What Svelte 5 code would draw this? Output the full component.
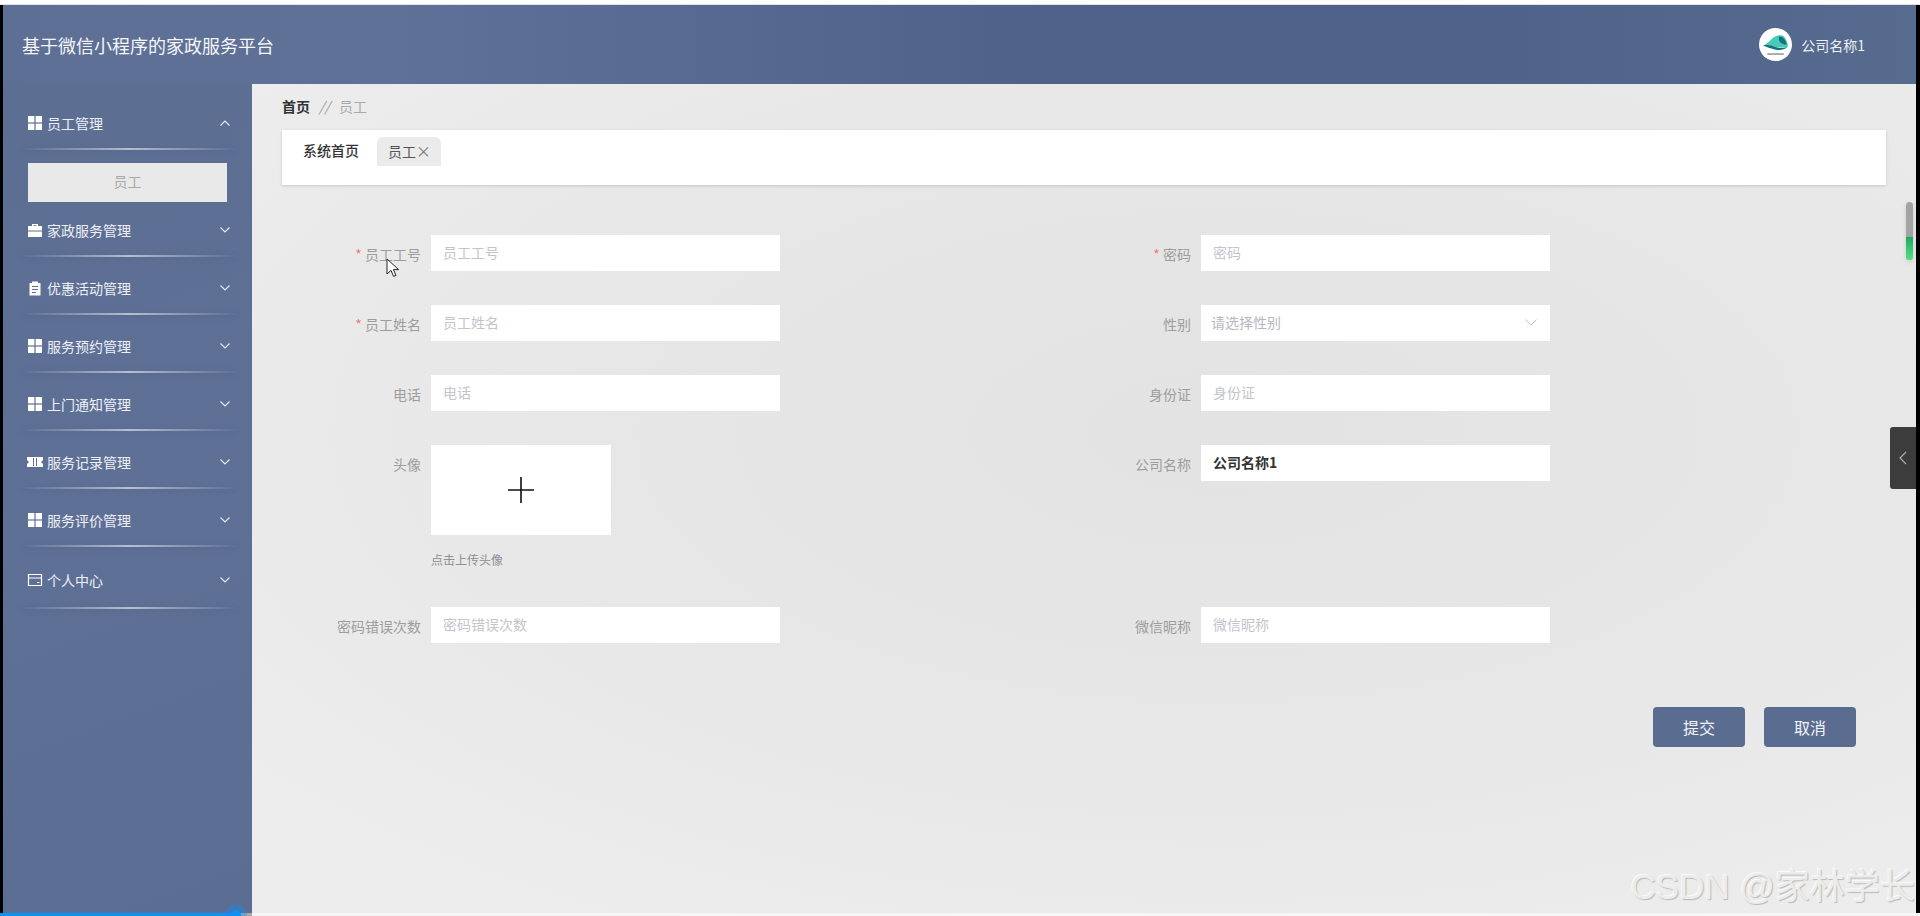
<script>
  const menus = [
    { name: "员工管理", icon: "grid", open: true, subs: ["员工"] },
    { name: "家政服务管理", icon: "case" },
    { name: "优惠活动管理", icon: "clip" },
    { name: "服务预约管理", icon: "grid" },
    { name: "上门通知管理", icon: "grid" },
    { name: "服务记录管理", icon: "ticket" },
    { name: "服务评价管理", icon: "grid" },
    { name: "个人中心", icon: "card" }
  ];
</script>

<div class="strip-top"></div>
<div class="frame">
  <header class="topbar">
    <h1 class="title">基于微信小程序的家政服务平台</h1>
    <div class="user">
      <svg class="logo" viewBox="0 0 32 32" width="33" height="33">
        <circle cx="16" cy="16" r="16" fill="#fff" />
        <path d="M4 17c3-1 5-3 8-6 4-4 9-5 12-3 2 2 4 6 4 10-5 2-9 1-13 0-4-1-7-1-11-1z" fill="#43cdb6" />
        <path d="M4 17c4-1 8 0 11 1 5 2 9 2 13 0-2 3-8 4-12 3-4-1-8-2-12-4z" fill="#17707c" />
        <path d="M20 8c3 0 6 4 7 8-3 0-6-1-7-3-1-2-1-4 0-5z" fill="#1b6f7e" />
        <rect x="8" y="24.5" width="16" height="1.6" fill="#9a9ea5" />
      </svg>
      <span>公司名称1</span>
    </div>
  </header>

  <div class="body">
    <aside class="sidebar">
      {#each menus as menu}
        <div class="menu">
          <div class="menu-head">
            <svg class="icon" viewBox="0 0 16 16" width="16" height="16" fill="#fff">
              {#if menu.icon == "grid"}
                <rect x="1" y="1" width="6.4" height="6.4" /><rect x="8.6" y="1" width="6.4" height="6.4" />
                <rect x="1" y="8.6" width="6.4" height="6.4" /><rect x="8.6" y="8.6" width="6.4" height="6.4" />
              {:else if menu.icon == "case"}
                <path d="M5 4V2h6v2h4v4.6H1V4zm1.4 0h3.2V3.2H6.4zM1 9.6h14V15H1z" />
              {:else if menu.icon == "clip"}
                <path d="M5 1.5h6V3h2.5v12.5h-11V3H5zM5 6v1h6V6zm0 3v1h6V9zm0 3v1h4v-1z" fill-rule="evenodd" />
              {:else if menu.icon == "ticket"}
                <path d="M0 3h16v3l-2 2 2 2v3H0v-3l2-2-2-2zm6 1v8h1V4zm3 0v8h1V4z" fill-rule="evenodd" />
              {:else}
                <path d="M1.5 2.5h13v11h-13zM1.5 6h13M10 10.5h2.5" fill="none" stroke="#fff" stroke-width="1.2" />
              {/if}
            </svg>
            <span class="menu-name">{menu.name}</span>
            <svg class="chev" viewBox="0 0 10 6" width="10" height="6" fill="none" stroke="#e8ebf2" stroke-width="1.1">
              {#if menu.open}
                <polyline points="0.5,5.5 5,1 9.5,5.5" />
              {:else}
                <polyline points="0.5,0.5 5,5 9.5,0.5" />
              {/if}
            </svg>
          </div>
          <div class="divider"></div>
          {#if menu.subs}
            {#each menu.subs as sub}
              <div class="sub">{sub}</div>
            {/each}
          {/if}
        </div>
      {/each}
    </aside>

    <main class="main">
      <div class="crumbs">
        <b>首页</b>
        <i>//</i>
        <span>员工</span>
      </div>

      <div class="tabs">
        <span class="tab">系统首页</span>
        <span class="tab active">员工<em>×</em></span>
      </div>

      <form class="form">
        <div class="field">
          <label><s>*</s> 员工工号</label>
          <input placeholder="员工工号" />
        </div>
        <div class="field">
          <label><s>*</s> 密码</label>
          <input placeholder="密码" />
        </div>
        <div class="field">
          <label><s>*</s> 员工姓名</label>
          <input placeholder="员工姓名" />
        </div>
        <div class="field">
          <label>性别</label>
          <div class="select">
            <span>请选择性别</span>
            <svg viewBox="0 0 12 7" width="12" height="7" fill="none" stroke="#c0c4cc" stroke-width="1"><polyline points="0.5,0.5 6,6 11.5,0.5" /></svg>
          </div>
        </div>
        <div class="field">
          <label>电话</label>
          <input placeholder="电话" />
        </div>
        <div class="field">
          <label>身份证</label>
          <input placeholder="身份证" />
        </div>
        <div class="field">
          <label>头像</label>
          <div class="upload-wrap">
            <div class="upload">
              <svg viewBox="0 0 26 26" width="26" height="26" stroke="#111" stroke-width="1.6"><path d="M13 0v26M0 13h26" /></svg>
            </div>
            <div class="hint">点击上传头像</div>
          </div>
        </div>
        <div class="field">
          <label>公司名称</label>
          <input class="filled" value="公司名称1" readonly />
        </div>
        <div class="field">
          <label>密码错误次数</label>
          <input placeholder="密码错误次数" />
        </div>
        <div class="field">
          <label>微信昵称</label>
          <input placeholder="微信昵称" />
        </div>
      </form>

      <div class="actions">
        <button type="button">提交</button>
        <button type="button">取消</button>
      </div>

      <div class="scroll-thumb"><div class="scroll-green"></div></div>
      <div class="handle">
        <svg viewBox="0 0 8 14" width="8" height="14" fill="none" stroke="#aaa" stroke-width="1.2"><polyline points="7,1 1,7 7,13" /></svg>
      </div>
      <div class="mark">CSDN @家林学长</div>

      <!-- screen recorder left the pointer on the first label -->
      <svg class="cursor" viewBox="0 0 14 20" width="14" height="20">
        <path d="M1 1v15l4-3.6 2.6 6 2.4-1-2.6-5.8h5.2z" fill="#fff" stroke="#222" stroke-width="1" />
      </svg>
    </main>
  </div>
</div>
<div class="strip-bottom">
  <div class="progress"><div class="knob"></div></div>
</div>

<style>
  :global(body) {
    background: #000;
    overflow: hidden;
  }

  .strip-top {
    height: 4px;
    background: #fff;
    border-bottom: 1px solid #dfe3ea;
  }

  .frame {
    height: 908px;
    padding: 0 4px 0 3px;
    background: #000;
    display: flex;
    flex-direction: column;
    font-family: "Noto Sans CJK SC", "Liberation Sans", sans-serif;
  }

  .topbar {
    height: 79px;
    flex: none;
    display: flex;
    align-items: center;
    justify-content: space-between;
    padding: 0 51px 0 19px;
    color: #fff;
    background: linear-gradient(90deg, #5d6f95 0%, #5f7197 20%, #4f6189 55%, #4e6289 75%, #566b8e 100%);
  }

  .title {
    margin: 0;
    font-size: 18px;
    font-weight: 400;
    color: #f4f5f8;
  }

  .user {
    display: flex;
    align-items: center;
    gap: 9px;
    font-size: 14px;
    color: #eef0f4;
  }

  .body {
    flex: 1;
    display: flex;
    min-height: 0;
  }

  .sidebar {
    width: 249px;
    flex: none;
    padding-top: 13px;
    background: linear-gradient(160deg, #5c6e92 0%, #5f7096 50%, #5c6d93 100%);
  }

  .menu {
    padding-top: 12px;
    padding-bottom: 5px;
  }

  .menu:last-child {
    padding-top: 14px;
  }

  .menu-head {
    display: flex;
    align-items: center;
    height: 28px;
    margin-bottom: 11px;
    padding: 0 22px 0 24px;
    color: #eef0f5;
    font-size: 14px;
  }

  .menu:last-child .menu-head {
    margin-bottom: 13px;
  }

  .icon {
    flex: none;
    margin-right: 4px;
  }

  .menu-name {
    flex: 1;
  }

  .divider {
    height: 2px;
    margin: 0 16px 0 20px;
    background: linear-gradient(90deg, rgba(255, 255, 255, 0), rgba(255, 255, 255, 0.55) 50%, rgba(255, 255, 255, 0));
    box-shadow: 0 1px 5px rgba(76, 96, 136, 0.45);
  }

  .sub {
    height: 39px;
    line-height: 37px;
    margin: 13px 25px -3px 25px;
    text-align: center;
    font-size: 14px;
    color: #a9a9a9;
    background: #e9e9e9;
  }

  .main {
    flex: 1;
    position: relative;
    padding: 11px 30px 0 30px;
    background: radial-gradient(ellipse 75% 70% at 58% 42%, #e3e3e3 0%, #e6e6e6 45%, #ededed 100%);
    overflow: hidden;
  }

  .crumbs {
    height: 25px;
    line-height: 23px;
    font-size: 14px;
    color: #aaa;
    display: flex;
    gap: 9px;
  }

  .crumbs b {
    font-weight: 700;
    color: #303133;
  }

  .crumbs i {
    color: #999;
    font-size: 14px;
  }

  .tabs {
    box-sizing: border-box;
    height: 55px;
    margin-top: 10px;
    padding: 7px 24px 0 9px;
    display: flex;
    align-items: flex-start;
    gap: 6px;
    background: #fff;
    box-shadow: 0 1px 3px rgba(0, 0, 0, 0.15);
  }

  .tab {
    height: 29px;
    line-height: 27px;
    padding: 0 12px;
    font-size: 14px;
    font-weight: 500;
    color: #333;
  }

  .tab.active {
    padding: 0 10px 0 11px;
    font-weight: 400;
    color: #555;
    background: #ebebeb;
    border-radius: 6px 6px 0 0;
  }

  .tab em {
    font-style: normal;
    font-size: 15px;
    color: #777;
  }

  .form {
    display: grid;
    grid-template-columns: 770px 770px;
    row-gap: 34px;
    margin: 50px 0 0 19px;
  }

  .field {
    display: flex;
    align-items: flex-start;
    gap: 10px;
  }

  .field label {
    width: 120px;
    height: 36px;
    flex: none;
    text-align: right;
    font-size: 14px;
    line-height: 39px;
    color: #9d9d9d;
  }

  .field label s {
    text-decoration: none;
    color: #ef7b7b;
  }

  .field input,
  .select {
    box-sizing: border-box;
    width: 349px;
    height: 36px;
    padding: 0 12px 2px;
    border: 0;
    outline: 0;
    background: #fff;
    font-family: inherit;
    font-size: 14px;
    color: #333;
  }

  .field input::placeholder {
    color: #c3c5cb;
    opacity: 1;
  }

  .field input.filled {
    font-weight: 600;
  }

  .select {
    display: flex;
    align-items: center;
    justify-content: space-between;
    padding: 0 13px 2px 10px;
    color: #b5b8bf;
  }

  .upload-wrap {
    height: 128px;
  }

  .upload {
    width: 180px;
    height: 90px;
    display: flex;
    align-items: center;
    justify-content: center;
    background: #fff;
  }

  .upload svg {
    margin-bottom: 1px;
  }

  .hint {
    margin-top: 16px;
    line-height: 18px;
    font-size: 12px;
    color: #8c9097;
  }

  .actions {
    display: flex;
    justify-content: flex-end;
    gap: 19px;
    margin-top: 64px;
    margin-right: 30px;
  }

  .actions button {
    width: 92px;
    height: 40px;
    border: 0;
    border-radius: 4px;
    background: #5a6d91;
    color: #f2f4f8;
    font-family: inherit;
    font-size: 16px;
  }

  .scroll-thumb {
    position: absolute;
    top: 118px;
    right: 3px;
    width: 7px;
    height: 58px;
    border-radius: 4px;
    overflow: hidden;
    background: #a3a3a3;
    box-shadow: 0 2px 5px rgba(0, 0, 0, 0.12);
  }

  .scroll-green {
    margin-top: 35px;
    height: 23px;
    background: linear-gradient(180deg, #1faa5e, #52e07f);
  }

  .handle {
    position: absolute;
    top: 343px;
    right: 0;
    width: 26px;
    height: 62px;
    display: flex;
    align-items: center;
    justify-content: center;
    background: #3c3c3c;
    border-radius: 3px 0 0 3px;
  }

  .mark {
    position: absolute;
    right: 1px;
    bottom: 6px;
    font-family: "Liberation Sans", "Noto Sans CJK SC", sans-serif;
    font-size: 35px;
    line-height: 40px;
    white-space: nowrap;
    color: #ececec;
    text-shadow: 1px 1px 1px #b9b9b9, -1px -1px 0 #fafafa;
  }

  .cursor {
    position: absolute;
    left: 134px;
    top: 174px;
  }

  .strip-bottom {
    height: 3px;
    position: relative;
    background: linear-gradient(90deg, #a8a8a8 0, #a8a8a8 252px, #f6f6f6 252px);
  }

  .progress {
    width: 236px;
    height: 3px;
    background: #0a93f5;
    position: relative;
  }

  .knob {
    position: absolute;
    right: -5px;
    top: -3px;
    width: 10px;
    height: 10px;
    border-radius: 50%;
    background: #0a93f5;
    box-shadow: 0 0 0 6px rgba(10, 147, 245, 0.35);
  }
</style>
